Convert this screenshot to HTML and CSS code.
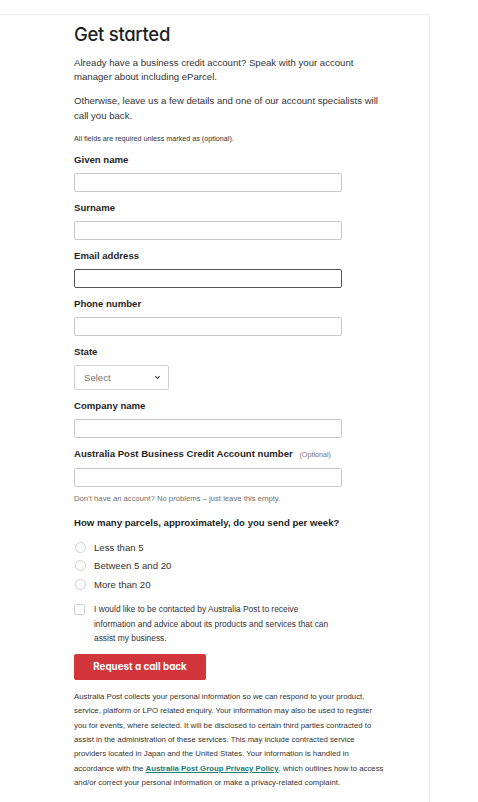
FILE: index.html
```html
<!DOCTYPE html>
<html lang="en">
<head>
<meta charset="utf-8">
<title>Get started</title>
<link rel="stylesheet" href="styles.css">
</head>
<body>
<main class="card">
  <h1 class="title">Get started</h1>
  <p class="intro">Already have a business credit account? Speak with your account manager about including eParcel.</p>
  <p class="intro">Otherwise, leave us a few details and one of our account specialists will call you back.</p>
  <p class="required-note">All fields are required unless marked as (optional).</p>

  <form class="form">
    <div class="field">
      <label class="label">Given name</label>
      <input class="input" type="text">
    </div>
    <div class="field">
      <label class="label">Surname</label>
      <input class="input" type="text">
    </div>
    <div class="field">
      <label class="label">Email address</label>
      <input class="input input-focus" type="text">
    </div>
    <div class="field">
      <label class="label">Phone number</label>
      <input class="input" type="text">
    </div>
    <div class="field">
      <label class="label">State</label>
      <div class="select">
        <span class="select-text">Select</span>
        <svg class="chevron" width="7" height="5" viewBox="0 0 7 5"><path d="M1.2 1.2 L3.5 3.4 L5.8 1.2" fill="none" stroke="#444" stroke-width="1.1"/></svg>
      </div>
    </div>
    <div class="field">
      <label class="label">Company name</label>
      <input class="input" type="text">
    </div>
    <div class="field field-last">
      <label class="label">Australia Post Business Credit Account number <span class="optional">(Optional)</span></label>
      <input class="input" type="text">
      <p class="hint">Don’t have an account? No problems – just leave this empty.</p>
    </div>

    <p class="question">How many parcels, approximately, do you send per week?</p>
    <div class="radios">
      <div class="radio-row"><span class="radio"></span><span>Less than 5</span></div>
      <div class="radio-row"><span class="radio"></span><span>Between 5 and 20</span></div>
      <div class="radio-row"><span class="radio"></span><span>More than 20</span></div>
    </div>

    <div class="check-row">
      <span class="checkbox"></span>
      <span class="check-text">I would like to be contacted by Australia Post to receive information and advice about its products and services that can assist my business.</span>
    </div>

    <button class="button" type="button">Request a call back</button>
  </form>

  <p class="privacy">Australia Post collects your personal information so we can respond to your product, service, platform or LPO related enquiry. Your information may also be used to register you for events, where selected. It will be disclosed to certain third parties contracted to assist in the administration of these services. This may include contracted service providers located in Japan and the United States. Your information is handled in accordance with the <a class="link" href="#">Australia Post Group Privacy Policy</a>, which outlines how to access and/or correct your personal information or make a privacy-related complaint.</p>
</main>
</body>
</html>
```
FILE: styles.css
```css
html, body {
  margin: 0;
  padding: 0;
  background: #ffffff;
}

body {
  font-family: "Liberation Sans", Arial, sans-serif;
  color: #2b2b2b;
  overflow: hidden;
}

.card {
  box-sizing: border-box;
  width: 430px;
  min-height: 788px;
  margin-top: 14px;
  padding: 7px 0 0 74px;
  border-top: 1px solid #efeeec;
  border-right: 1px solid #efeeec;
}

.title {
  font-family: Inter, sans-serif;
  font-feature-settings: "cv11" 1;
  font-weight: 500;
  font-size: 18.5px;
  line-height: 24px;
  letter-spacing: -0.3px;
  margin: 0 0 10px 0;
  color: #1f1f1f;
}

.intro {
  font-size: 9.6px;
  line-height: 14.4px;
  margin: 0 0 9.6px 0;
  width: 310px;
  color: #333;
}

.required-note {
  font-size: 7.2px;
  line-height: 11px;
  margin: 8px 0 10px 0;
  color: #333;
}

.form {
  display: flex;
  flex-direction: column;
  width: 268px;
}

.field {
  display: flex;
  flex-direction: column;
  margin-bottom: 10px;
}

.field-last {
  margin-bottom: 0;
}

.label {
  font-weight: bold;
  font-size: 9.6px;
  line-height: 12px;
  margin-bottom: 7px;
  color: #1f1f1f;
  white-space: nowrap;
}

.optional {
  font-weight: normal;
  font-size: 7.2px;
  color: #777;
  margin-left: 4px;
}

.input {
  box-sizing: border-box;
  width: 268px;
  height: 19px;
  border: 1px solid #c9c9c9;
  border-radius: 2px;
  margin: 0;
  padding: 0 6px;
  background: #fff;
}

.input-focus {
  border-color: #555;
}

.select {
  box-sizing: border-box;
  width: 95px;
  height: 25px;
  border: 1px solid #cfcfcf;
  border-radius: 2px;
  display: flex;
  align-items: center;
  justify-content: space-between;
  padding: 0 7px 0 9px;
}

.select-text {
  font-size: 9.6px;
  color: #777;
}

.chevron {
  display: block;
}

.hint {
  font-size: 7.7px;
  line-height: 11px;
  margin: 6px 0 0 0;
  color: #6f6f6f;
  white-space: nowrap;
}

.question {
  font-weight: bold;
  font-size: 9.6px;
  line-height: 12px;
  margin: 13px 0 9px 0;
  color: #1f1f1f;
  white-space: nowrap;
}

.radios {
  display: flex;
  flex-direction: column;
}

.radio-row {
  display: flex;
  align-items: center;
  height: 18.5px;
  font-size: 9.6px;
  color: #333;
}

.radio {
  box-sizing: border-box;
  flex: none;
  width: 11px;
  height: 11px;
  border: 1px solid #cfcfcf;
  border-radius: 50%;
  margin-left: 1px;
  margin-right: 8px;
}

.check-row {
  display: flex;
  align-items: flex-start;
  margin-top: 9px;
}

.checkbox {
  box-sizing: border-box;
  flex: none;
  width: 11px;
  height: 11px;
  border: 1px solid #cfcfcf;
  border-radius: 2px;
  margin-top: 2px;
  margin-right: 9px;
}

.check-text {
  font-size: 8.4px;
  line-height: 14.5px;
  color: #333;
  width: 245px;
}

.button {
  margin-top: 8px;
  width: 132px;
  height: 26px;
  border: none;
  border-radius: 2px;
  background: #d2363c;
  color: #fff;
  font-family: Inter, sans-serif;
  font-feature-settings: "cv11" 1;
  font-weight: 700;
  font-size: 9.8px;
  padding: 0;
  cursor: pointer;
}

.privacy {
  font-size: 7.8px;
  line-height: 14.4px;
  margin: 10px 0 0 0;
  width: 310px;
  color: #333;
}

.link {
  color: #187b73;
  font-weight: bold;
  text-decoration: underline;
}
```
